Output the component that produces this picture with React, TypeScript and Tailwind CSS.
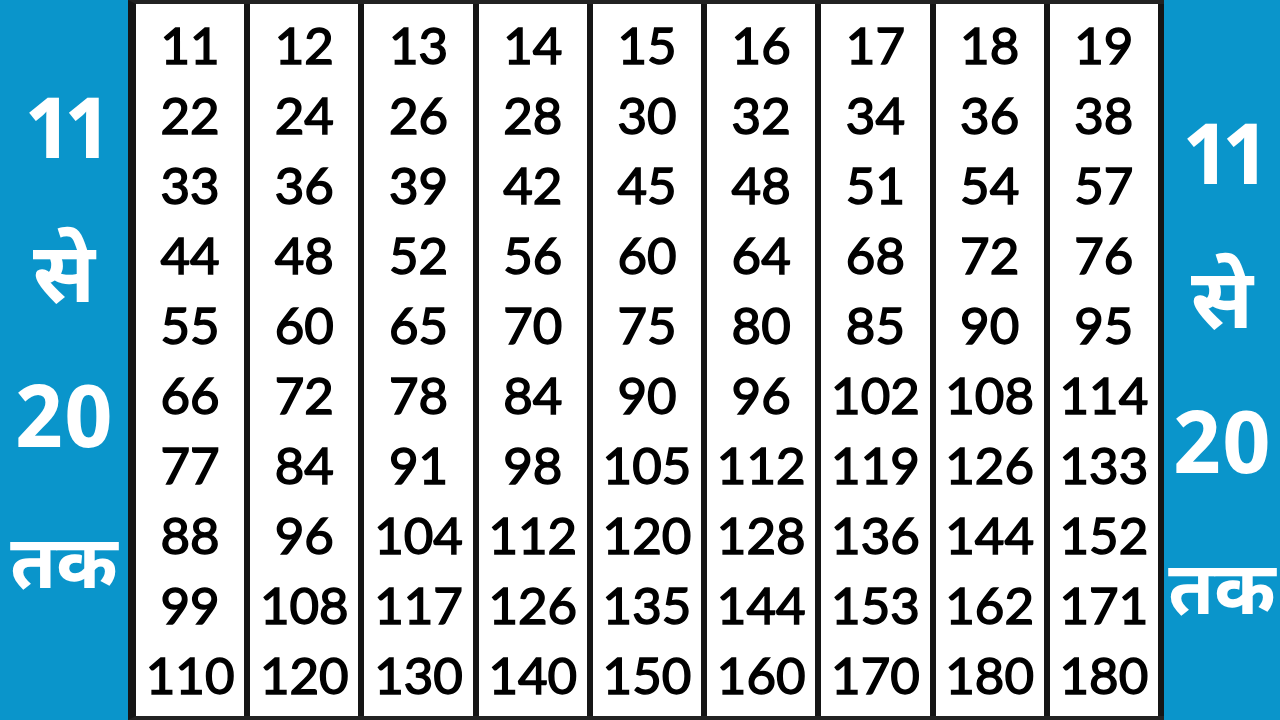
import React from 'react';

const bases = [11, 12, 13, 14, 15, 16, 17, 18, 19];

// the last cell of the 19 column reads 180 in the chart, kept as shown
const cell = (n: number, k: number) => (n === 19 && k === 10 ? 180 : n * k);

const SidePanel: React.FC<{ top: string }> = ({ top }) => {
  return (
    <div
      className={`flex h-full flex-col items-center bg-[#0a95cb] text-white ${top}`}
      style={{ fontFamily: '"Noto Sans Devanagari", "Lohit Devanagari", "Noto Sans", sans-serif' }}
    >
      <div className="flex h-[144px] items-center justify-center text-[84px] font-bold leading-none tracking-[-8px]">
        11
      </div>
      <div className="flex h-[144px] items-center justify-center text-[84px] font-bold leading-none">से</div>
      <div className="flex h-[144px] items-center justify-center text-[86px] font-bold leading-none">20</div>
      <div className="flex h-[144px] items-center justify-center text-[74px] font-bold leading-none">तक</div>
    </div>
  );
};

export default function App() {
  return (
    <div className="flex h-[720px] w-[1280px] overflow-hidden bg-white">
      <div className="w-[128px] shrink-0">
        <SidePanel top="pt-[66px]" />
      </div>

      <div className="flex w-[1036px] shrink-0 border-y-[4px] border-l-[8px] border-y-[#222] border-l-[#151515] bg-white">
        {bases.map((n) => (
          <div
            key={n}
            className="flex flex-1 flex-col items-center border-r-[6px] border-[#151515] pt-[6px]"
            style={{ fontFamily: 'Lato, "Noto Sans", sans-serif' }}
          >
            {Array.from({ length: 10 }, (_, i) => (
              <div
                key={i}
                className="h-[70px] text-[51px] font-normal leading-[70px] text-black [-webkit-text-stroke:1.5px_#000]"
              >
                {cell(n, i + 1)}
              </div>
            ))}
          </div>
        ))}
      </div>

      <div className="w-[116px] shrink-0">
        <SidePanel top="pt-[92px]" />
      </div>
    </div>
  );
}
